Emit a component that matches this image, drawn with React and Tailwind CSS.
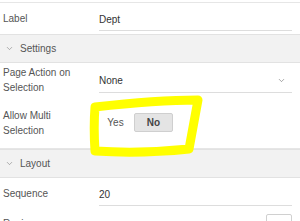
import { ChevronDown, ChevronRight, X } from "lucide-react"

function Header({ title }) {
    return (
        <div className="h-[29px] flex items-center gap-[6px] pl-[5px] bg-[#f2f2f2] border-y border-[#e2e2e2] text-[#555]">
            <ChevronDown size={9} strokeWidth={1.5} className="text-[#777]" />
            <span>{title}</span>
        </div>
    )
}

function Row({ label, children, className = "" }) {
    return (
        <div className={`flex items-center ${className}`}>
            <div className="w-[99px] pl-[3px] text-[#555] leading-[15px]">{label}</div>
            <div className="flex-1 pr-[8px]">{children}</div>
        </div>
    )
}

export default function App() {
    return (
        <div className="relative w-[300px] h-[221px] overflow-hidden bg-white text-[10px] text-[#333]" style={{ fontFamily: '"Liberation Sans", Arial, sans-serif' }}>
            <div className="h-[3px] border-b border-[#e6e6e6]" />

            <Row label="Label" className="h-[31px]">
                <div className="border-b border-[#ddd] pt-[6px] pb-[3px]">Dept</div>
            </Row>

            <Header title="Settings" />

            <Row label={<>Page Action on<br />Selection</>} className="h-[34px]">
                <div className="flex items-center justify-between border-b border-[#ddd] pt-[6px] pb-[4px] pr-[6px]">
                    <span>None</span>
                    <ChevronDown size={9} strokeWidth={1.5} className="text-[#666]" />
                </div>
            </Row>

            <Row label={<>Allow Multi<br />Selection</>} className="h-[52px] border-b border-[#e6e6e6]">
                <div className="flex -ml-[2px]">
                    <div className="w-[37px] h-[19px] flex items-center justify-center text-[#555]">Yes</div>
                    <div className="w-[39px] h-[19px] flex items-center justify-center bg-[#e4e4e4] border border-[#cfcfcf] rounded-[2px] font-bold text-[#444]">No</div>
                </div>
            </Row>

            <Header title="Layout" />

            <Row label="Sequence" className="h-[30px]">
                <div className="border-b border-[#ddd] pt-[6px] pb-[3px]">20</div>
            </Row>

            <Row label="Region" className="h-[30px]">
                <div className="flex items-start gap-[12px] pt-[4px]">
                    <span className="flex-1 pt-[4px]">Dept</span>
                    <X size={9} strokeWidth={1.5} className="text-[#777] mt-[7px]" />
                    <div className="w-[26px] h-[22px] border border-[#d0d0d0] rounded-[2px] flex items-center justify-center">
                        <ChevronRight size={10} strokeWidth={1.5} className="text-[#555]" />
                    </div>
                </div>
            </Row>

            {/* marker scribble */}
            <svg className="absolute inset-0 pointer-events-none" width="300" height="221" viewBox="0 0 300 221">
                <path
                    d="M 95,107 C 130,103 170,100 198,100 C 195,116 192,132 189,149 C 160,152 125,153 95,151 C 94,136 94,120 95,107 Z"
                    fill="none"
                    stroke="#ffff00"
                    strokeWidth="9"
                    strokeLinejoin="round"
                />
            </svg>
        </div>
    )
}
